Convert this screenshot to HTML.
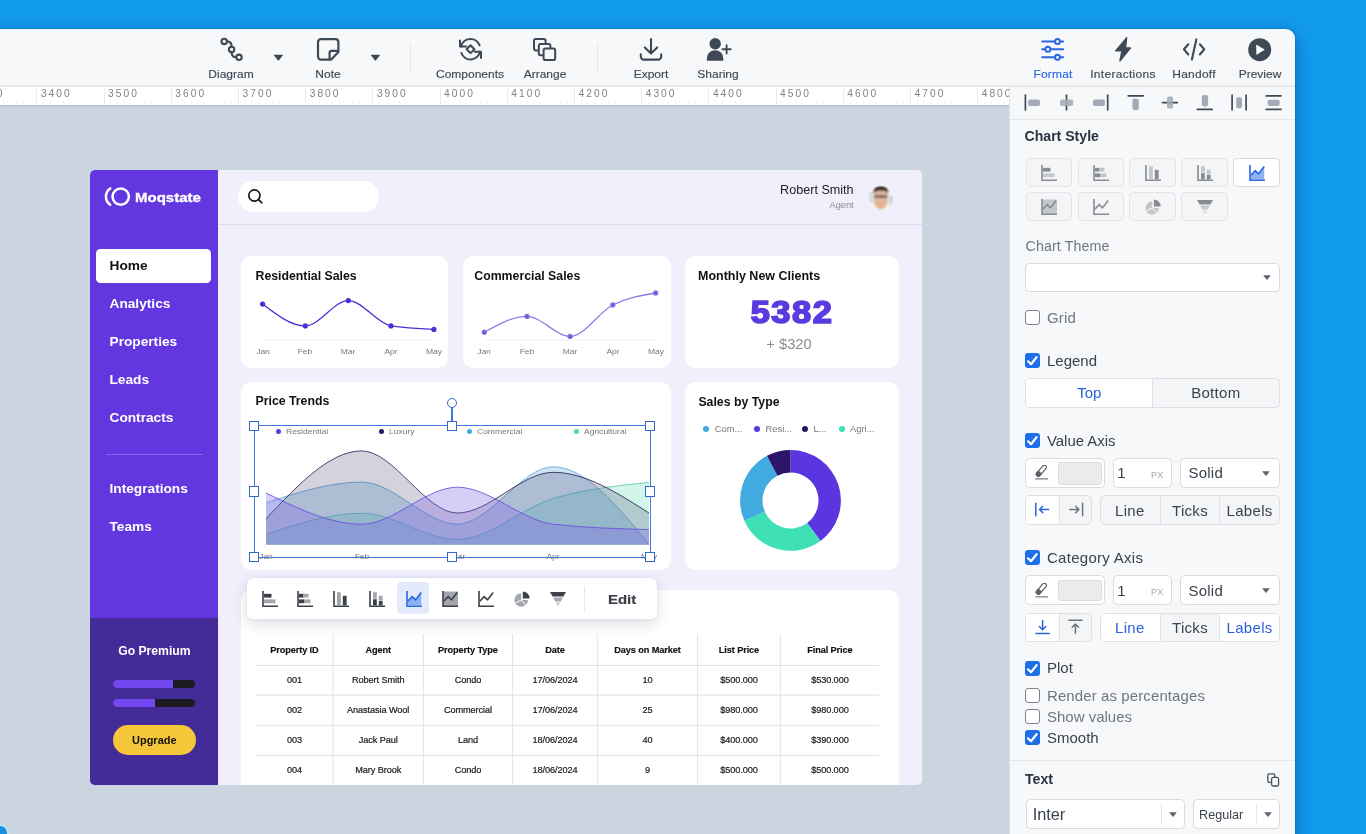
<!DOCTYPE html><html lang="en"><head><meta charset="utf-8"><title>Moqups - Chart Format</title><style>
*{box-sizing:border-box;margin:0;padding:0}
html,body{width:1366px;height:834px;overflow:hidden}
body{background:#129cee;font-family:"Liberation Sans",sans-serif;position:relative;color:#3d4654}
.abs{position:absolute}
#root{position:absolute;left:0;top:0;width:1366px;height:834px;overflow:hidden;will-change:transform}
#winbg{position:absolute;left:-40px;top:29px;width:1335px;height:900px;background:#f7f8fa;border-radius:0 9px 0 0;box-shadow:0 0 1.500px rgba(0,30,80,.55),0 5px 20px rgba(0,30,90,.42)}
#tbline{position:absolute;left:0;top:85px;width:1295px;height:2px;background:#e6e8ec}
.tl{position:absolute;top:67.400px;font-size:11px;line-height:14px;color:#3f4956;white-space:nowrap;transform:translateX(-50%) scaleX(1.090);-webkit-text-stroke:.150px #3f4956}
.tl.on{color:#2b66e3;-webkit-text-stroke-color:#2b66e3}
.ico{position:absolute;overflow:visible}
.sep{position:absolute;top:44px;width:1px;height:27px;background:#e3e5e9}
#ruler{position:absolute;left:0;top:87px;width:1009px;height:18px;background:#fff;overflow:hidden}
#ruler .mj{position:absolute;top:1px;width:1px;height:17px;background:#e8eaed}
#ruler .mn{position:absolute;top:14px;width:1px;height:4px;background:#f1f2f4}
#ruler .rt{position:absolute;top:1px;font-size:10.200px;line-height:12px;letter-spacing:2.050px;color:#7e8288}
#canvas{position:absolute;left:0;top:105px;width:1009px;height:729px;background:#cbd5e0;overflow:hidden}
#pbd{position:absolute;left:1009px;top:87px;width:1px;height:747px;background:#dfe1ea}
#panel{position:absolute;left:1010px;top:87px;width:285px;height:747px;background:#f7f8fa;overflow:hidden}

#frame{position:absolute;left:90px;top:65px;width:832px;height:615px;background:#f0effb;border-radius:5px;overflow:hidden}
#frame .t{position:absolute;white-space:nowrap}
#side{position:absolute;left:0;top:0;width:127.600px;height:615px;background:#6237e0}
#prem{position:absolute;left:0;top:447.800px;width:127.600px;height:170px;background:#442c98}
.card{position:absolute;background:#fff;border-radius:10px}
.hd{position:absolute;width:10.400px;height:10.400px;background:#fff;border:1.500px solid #3468c8}
#ftb{position:absolute;left:246.500px;top:473px;width:410.700px;height:41.200px;background:#fff;border-radius:6px;box-shadow:0 4px 14px rgba(40,40,90,.17),0 0 2px rgba(40,40,90,.10)}

#panel .t{position:absolute;white-space:nowrap}
#panel .bx{position:absolute;border:1px solid #d8dbe0;border-radius:4.500px;background:#fff}
#panel .sg{position:absolute;border:1px solid #dcdfe3;border-radius:4.500px;background:#f4f5f7;overflow:hidden}
#panel .sg i{position:absolute;top:0;bottom:0;display:block}
#panel .sg i.on{background:#fff}
#panel .sg i.dv{width:1px;background:#dfe2e6}
#panel .cb{position:absolute;width:15px;height:15px;border-radius:3px;border:1.300px solid #7d828c;background:#fff}
#panel .cb.on{border:none;background:#1c6fe8}
#panel .csb{position:absolute;width:46.700px;height:29.100px;border:1px solid #e1e4e8;border-radius:4.500px;background:#f4f5f7}
#panel .csb.on{background:#fff;border-color:#d6d9de}
#panel .hr{position:absolute;left:0;width:285px;height:1px;background:#e4e6ea}

</style></head><body>
<div id="root"><div id="winbg"></div><div id="tbline"></div>
<!-- TOOLBAR -->
<svg class="ico" style="left:220px;top:38px" width="24" height="24" viewBox="0 0 24 24" fill="none" stroke="#3f4956" stroke-width="2.1" stroke-linecap="round"><circle cx="4.2" cy="3.4" r="2.7"/><circle cx="11.6" cy="11.4" r="2.7"/><circle cx="19" cy="19.3" r="2.7"/><path d="M7 3.4C10.4 3.4 11.6 5.2 11.6 8.6M11.6 14.2C11.6 17.6 12.9 19.3 16.2 19.3"/></svg>
<div class="tl" style="left:231.2px">Diagram</div>
<svg class="ico" style="left:273.200px;top:54px" width="10.800" height="7.300" viewBox="0 0 10 7"><path d="M1.2 .6h7.6q.9 0 .35.75L5.6 5.9q-.6.7-1.2 0L.85 1.35Q.3.6 1.2.6z" fill="#3f4956"/></svg>
<svg class="ico" style="left:316px;top:37px" width="25" height="25" viewBox="0 0 25 25" fill="none" stroke="#3f4956" stroke-width="2.2" stroke-linejoin="round" stroke-linecap="round"><path d="M5 2.2h14.4a3 3 0 0 1 3 3v9.8l-7.2 7.6H5a3 3 0 0 1-3-3V5.2a3 3 0 0 1 3-3z"/><path d="M13.6 22.3v-6.4a2 2 0 0 1 2-2h6.4"/></svg>
<div class="tl" style="left:328.4px">Note</div>
<svg class="ico" style="left:370.200px;top:54px" width="10.800" height="7.300" viewBox="0 0 10 7"><path d="M1.2 .6h7.6q.9 0 .35.75L5.6 5.9q-.6.7-1.2 0L.85 1.35Q.3.6 1.2.6z" fill="#3f4956"/></svg>
<div class="sep" style="left:410px"></div>
<svg class="ico" style="left:458px;top:37px" width="25" height="25" viewBox="0 0 25 25" fill="none" stroke="#3f4956" stroke-width="2" stroke-linecap="round" stroke-linejoin="round"><path d="M3 9.600A9.700 9.700 0 0 1 21.600 8.400"/><path d="M22 14.800A9.700 9.700 0 0 1 3.400 16"/><path d="M2 3.400v6.200h6.200"/><path d="M23 21v-6.200h-6.200"/><path d="M12.500 8.300l3.900 3.900-3.900 3.900-3.900-3.900z"/></svg>
<div class="tl" style="left:470.3px">Components</div>
<svg class="ico" style="left:531.800px;top:36.700px" width="25" height="25" viewBox="0 0 25 25" fill="#f7f8fa" stroke="#3f4956" stroke-width="2" stroke-linejoin="round"><rect x="2" y="2" width="11.6" height="11.4" rx="1.8"/><rect x="6.8" y="6.9" width="11.6" height="11.4" rx="1.8"/><rect x="11.6" y="11.6" width="11.6" height="11.4" rx="1.8"/></svg>
<div class="tl" style="left:544.5px">Arrange</div>
<div class="sep" style="left:597px"></div>
<svg class="ico" style="left:639px;top:37px" width="25" height="25" viewBox="0 0 25 25" fill="none" stroke="#3f4956" stroke-width="2.1" stroke-linecap="round" stroke-linejoin="round"><path d="M12 2v14M5.8 10.4L12 16.6l6.200-6.200"/><path d="M1.8 17.400v2.200a3 3 0 0 0 3 3h14.400a3 3 0 0 0 3-3v-2.200"/></svg>
<div class="tl" style="left:650.8px">Export</div>
<svg class="ico" style="left:706px;top:37px" width="26" height="25" viewBox="0 0 26 25"><circle cx="9.200" cy="6.800" r="5.700" fill="#3f4956"/><path d="M.9 23.700v-2.300a8.200 8.200 0 0 1 16.400 0v2.300z" fill="#3f4956"/><path d="M20.600 8.200v8.200M16.500 12.300h8.200" stroke="#3f4956" stroke-width="1.900" stroke-linecap="round"/></svg>
<div class="tl" style="left:718.4px">Sharing</div>
<!-- right group -->
<svg class="ico" style="left:1040px;top:37px" width="25" height="25" viewBox="0 0 25 25" fill="#f7f8fa" stroke="#2b66e3" stroke-width="2" stroke-linecap="round"><path d="M2.200 4.500h21M2.200 12.200h21M2.200 20.200h21"/><circle cx="17.500" cy="4.500" r="2.500"/><circle cx="7.900" cy="12.200" r="2.500"/><circle cx="17.500" cy="20.200" r="2.500"/></svg>
<div class="tl on" style="left:1052.600px;letter-spacing:.150px">Format</div>
<svg class="ico" style="left:1113px;top:36px" width="21" height="27" viewBox="0 0 21 27"><path d="M13.700 1.700L2.600 14.900h6.300L6.900 25l10.700-13.100h-5z" fill="#3f4956" stroke="#3f4956" stroke-width="1.300" stroke-linejoin="round"/></svg>
<div class="tl" style="left:1123.100px;letter-spacing:.280px">Interactions</div>
<svg class="ico" style="left:1182px;top:37px" width="25" height="25" viewBox="0 0 25 25" fill="none" stroke="#3f4956" stroke-width="2.100" stroke-linecap="round" stroke-linejoin="round"><path d="M6.300 7.300L2 12.300l4.300 5.200M17.900 7.300l4.300 5-4.300 5.200M14.400 2.200L9.900 22.500"/></svg>
<div class="tl" style="left:1193.900px;letter-spacing:.220px">Handoff</div>
<svg class="ico" style="left:1248px;top:38px" width="24" height="24" viewBox="0 0 24 24"><circle cx="11.700" cy="11.700" r="11.500" fill="#3f4956"/><path d="M9 6.900l7.200 4.400q.6.400 0 .8L9 16.500q-.7.400-.7-.4V7.300q0-.8.700-.4z" fill="#fff"/></svg>
<div class="tl" style="left:1259.700px">Preview</div>

<div id="ruler"><div class="mj" style="left:-30.8px"></div><div class="rt" style="left:-26.3px">3300</div><div class="mn" style="left:-24.08px"></div><div class="mn" style="left:-17.36px"></div><div class="mn" style="left:-10.64px"></div><div class="mn" style="left:-3.92px"></div><div class="mn" style="left:2.80px"></div><div class="mn" style="left:9.52px"></div><div class="mn" style="left:16.24px"></div><div class="mn" style="left:22.96px"></div><div class="mn" style="left:29.68px"></div><div class="mj" style="left:36.4px"></div><div class="rt" style="left:40.9px">3400</div><div class="mn" style="left:43.12px"></div><div class="mn" style="left:49.84px"></div><div class="mn" style="left:56.56px"></div><div class="mn" style="left:63.28px"></div><div class="mn" style="left:70.00px"></div><div class="mn" style="left:76.72px"></div><div class="mn" style="left:83.44px"></div><div class="mn" style="left:90.16px"></div><div class="mn" style="left:96.88px"></div><div class="mj" style="left:103.6px"></div><div class="rt" style="left:108.1px">3500</div><div class="mn" style="left:110.32px"></div><div class="mn" style="left:117.04px"></div><div class="mn" style="left:123.76px"></div><div class="mn" style="left:130.48px"></div><div class="mn" style="left:137.20px"></div><div class="mn" style="left:143.92px"></div><div class="mn" style="left:150.64px"></div><div class="mn" style="left:157.36px"></div><div class="mn" style="left:164.08px"></div><div class="mj" style="left:170.8px"></div><div class="rt" style="left:175.3px">3600</div><div class="mn" style="left:177.52px"></div><div class="mn" style="left:184.24px"></div><div class="mn" style="left:190.96px"></div><div class="mn" style="left:197.68px"></div><div class="mn" style="left:204.40px"></div><div class="mn" style="left:211.12px"></div><div class="mn" style="left:217.84px"></div><div class="mn" style="left:224.56px"></div><div class="mn" style="left:231.28px"></div><div class="mj" style="left:238.0px"></div><div class="rt" style="left:242.5px">3700</div><div class="mn" style="left:244.72px"></div><div class="mn" style="left:251.44px"></div><div class="mn" style="left:258.16px"></div><div class="mn" style="left:264.88px"></div><div class="mn" style="left:271.60px"></div><div class="mn" style="left:278.32px"></div><div class="mn" style="left:285.04px"></div><div class="mn" style="left:291.76px"></div><div class="mn" style="left:298.48px"></div><div class="mj" style="left:305.2px"></div><div class="rt" style="left:309.7px">3800</div><div class="mn" style="left:311.92px"></div><div class="mn" style="left:318.64px"></div><div class="mn" style="left:325.36px"></div><div class="mn" style="left:332.08px"></div><div class="mn" style="left:338.80px"></div><div class="mn" style="left:345.52px"></div><div class="mn" style="left:352.24px"></div><div class="mn" style="left:358.96px"></div><div class="mn" style="left:365.68px"></div><div class="mj" style="left:372.4px"></div><div class="rt" style="left:376.9px">3900</div><div class="mn" style="left:379.12px"></div><div class="mn" style="left:385.84px"></div><div class="mn" style="left:392.56px"></div><div class="mn" style="left:399.28px"></div><div class="mn" style="left:406.00px"></div><div class="mn" style="left:412.72px"></div><div class="mn" style="left:419.44px"></div><div class="mn" style="left:426.16px"></div><div class="mn" style="left:432.88px"></div><div class="mj" style="left:439.6px"></div><div class="rt" style="left:444.1px">4000</div><div class="mn" style="left:446.32px"></div><div class="mn" style="left:453.04px"></div><div class="mn" style="left:459.76px"></div><div class="mn" style="left:466.48px"></div><div class="mn" style="left:473.20px"></div><div class="mn" style="left:479.92px"></div><div class="mn" style="left:486.64px"></div><div class="mn" style="left:493.36px"></div><div class="mn" style="left:500.08px"></div><div class="mj" style="left:506.8px"></div><div class="rt" style="left:511.3px">4100</div><div class="mn" style="left:513.52px"></div><div class="mn" style="left:520.24px"></div><div class="mn" style="left:526.96px"></div><div class="mn" style="left:533.68px"></div><div class="mn" style="left:540.40px"></div><div class="mn" style="left:547.12px"></div><div class="mn" style="left:553.84px"></div><div class="mn" style="left:560.56px"></div><div class="mn" style="left:567.28px"></div><div class="mj" style="left:574.0px"></div><div class="rt" style="left:578.5px">4200</div><div class="mn" style="left:580.72px"></div><div class="mn" style="left:587.44px"></div><div class="mn" style="left:594.16px"></div><div class="mn" style="left:600.88px"></div><div class="mn" style="left:607.60px"></div><div class="mn" style="left:614.32px"></div><div class="mn" style="left:621.04px"></div><div class="mn" style="left:627.76px"></div><div class="mn" style="left:634.48px"></div><div class="mj" style="left:641.2px"></div><div class="rt" style="left:645.7px">4300</div><div class="mn" style="left:647.92px"></div><div class="mn" style="left:654.64px"></div><div class="mn" style="left:661.36px"></div><div class="mn" style="left:668.08px"></div><div class="mn" style="left:674.80px"></div><div class="mn" style="left:681.52px"></div><div class="mn" style="left:688.24px"></div><div class="mn" style="left:694.96px"></div><div class="mn" style="left:701.68px"></div><div class="mj" style="left:708.4px"></div><div class="rt" style="left:712.9px">4400</div><div class="mn" style="left:715.12px"></div><div class="mn" style="left:721.84px"></div><div class="mn" style="left:728.56px"></div><div class="mn" style="left:735.28px"></div><div class="mn" style="left:742.00px"></div><div class="mn" style="left:748.72px"></div><div class="mn" style="left:755.44px"></div><div class="mn" style="left:762.16px"></div><div class="mn" style="left:768.88px"></div><div class="mj" style="left:775.6px"></div><div class="rt" style="left:780.1px">4500</div><div class="mn" style="left:782.32px"></div><div class="mn" style="left:789.04px"></div><div class="mn" style="left:795.76px"></div><div class="mn" style="left:802.48px"></div><div class="mn" style="left:809.20px"></div><div class="mn" style="left:815.92px"></div><div class="mn" style="left:822.64px"></div><div class="mn" style="left:829.36px"></div><div class="mn" style="left:836.08px"></div><div class="mj" style="left:842.8px"></div><div class="rt" style="left:847.3px">4600</div><div class="mn" style="left:849.52px"></div><div class="mn" style="left:856.24px"></div><div class="mn" style="left:862.96px"></div><div class="mn" style="left:869.68px"></div><div class="mn" style="left:876.40px"></div><div class="mn" style="left:883.12px"></div><div class="mn" style="left:889.84px"></div><div class="mn" style="left:896.56px"></div><div class="mn" style="left:903.28px"></div><div class="mj" style="left:910.0px"></div><div class="rt" style="left:914.5px">4700</div><div class="mn" style="left:916.72px"></div><div class="mn" style="left:923.44px"></div><div class="mn" style="left:930.16px"></div><div class="mn" style="left:936.88px"></div><div class="mn" style="left:943.60px"></div><div class="mn" style="left:950.32px"></div><div class="mn" style="left:957.04px"></div><div class="mn" style="left:963.76px"></div><div class="mn" style="left:970.48px"></div><div class="mj" style="left:977.2px"></div><div class="rt" style="left:981.7px">4800</div><div class="mn" style="left:983.92px"></div><div class="mn" style="left:990.64px"></div><div class="mn" style="left:997.36px"></div><div class="mn" style="left:1004.08px"></div><div class="mn" style="left:1010.80px"></div><div class="mn" style="left:1017.52px"></div><div class="mn" style="left:1024.24px"></div><div class="mn" style="left:1030.96px"></div><div class="mn" style="left:1037.68px"></div><div class="mj" style="left:1044.4px"></div><div class="rt" style="left:1048.9px">4900</div><div class="mn" style="left:1051.12px"></div><div class="mn" style="left:1057.84px"></div><div class="mn" style="left:1064.56px"></div><div class="mn" style="left:1071.28px"></div><div class="mn" style="left:1078.00px"></div><div class="mn" style="left:1084.72px"></div><div class="mn" style="left:1091.44px"></div><div class="mn" style="left:1098.16px"></div><div class="mn" style="left:1104.88px"></div></div>
<div id="canvas"><div class="abs" style="left:0;top:0;width:1010px;height:3px;background:linear-gradient(rgba(90,110,150,.16),rgba(90,110,150,0))"></div>
<div id="frame">
<div id="side"></div><div id="prem"></div>
<svg class="abs" style="left:13px;top:16px" width="28" height="22" viewBox="0 0 28 22" fill="none" stroke="#fff" stroke-width="2.500" stroke-linecap="round"><circle cx="17.700" cy="10.600" r="8.200"/><path d="M7.200 2.400A10 10 0 0 0 7.200 18.800"/></svg>
<div class="t" style="left:45.20px;top:19px;font-size:13.60px;line-height:17px;font-weight:700;color:#fff;transform:scaleX(1.105);transform-origin:0 50%;-webkit-text-stroke:.350px #fff;">Moqstate</div>
<div class="abs" style="left:6.300px;top:78.600px;width:114.700px;height:34px;background:#fff;border-radius:4.500px"></div>
<div class="t" style="left:19.50px;top:87px;font-size:13.70px;line-height:17px;font-weight:700;color:#111;">Home</div>
<div class="t" style="left:19.50px;top:125px;font-size:13.70px;line-height:17px;font-weight:700;color:#fff;">Analytics</div>
<div class="t" style="left:19.50px;top:163px;font-size:13.70px;line-height:17px;font-weight:700;color:#fff;">Properties</div>
<div class="t" style="left:19.50px;top:201px;font-size:13.70px;line-height:17px;font-weight:700;color:#fff;">Leads</div>
<div class="t" style="left:19.50px;top:239px;font-size:13.70px;line-height:17px;font-weight:700;color:#fff;">Contracts</div>
<div class="t" style="left:19.50px;top:310px;font-size:13.70px;line-height:17px;font-weight:700;color:#fff;">Integrations</div>
<div class="t" style="left:19.50px;top:348px;font-size:13.70px;line-height:17px;font-weight:700;color:#fff;">Teams</div>
<div class="abs" style="left:15.600px;top:284.200px;width:97.600px;height:1px;background:#8a68ee"></div>
<div class="t" style="left:64.40px;top:473px;font-size:12.20px;line-height:16px;font-weight:700;color:#fff;transform:translateX(-50%);">Go Premium</div>
<div class="abs" style="left:22.600px;top:510.100px;width:82.500px;height:7.800px;border-radius:4px;background:#1c1b22;overflow:hidden"><div style="width:60px;height:100%;background:#7448f0"></div></div>
<div class="abs" style="left:22.600px;top:528.800px;width:82.500px;height:7.800px;border-radius:4px;background:#1c1b22;overflow:hidden"><div style="width:42.400px;height:100%;background:#7448f0"></div></div>
<div class="abs" style="left:22.600px;top:555.100px;width:83.400px;height:30.200px;border-radius:15.100px;background:#f6c63a"></div>
<div class="t" style="left:64.30px;top:563px;font-size:11.00px;line-height:14px;font-weight:700;color:#111;transform:translateX(-50%);">Upgrade</div>
<div class="abs" style="left:148.200px;top:11.200px;width:140.800px;height:31px;border-radius:15.500px;background:#fff"></div>
<svg class="abs" style="left:156px;top:17px" width="18" height="18" viewBox="0 0 18 18" fill="none" stroke="#111" stroke-width="1.600" stroke-linecap="round"><circle cx="8.400" cy="8.500" r="5.600"/><path d="M12.600 12.700l3.300 3.100"/></svg>
<div class="abs" style="left:127.600px;top:53.800px;width:705px;height:1px;background:#dddbee"></div>
<div class="t" style="left:763.60px;top:12px;font-size:12.60px;line-height:16px;font-weight:400;color:#222;transform:translateX(-100%);transform-origin:100% 50%;">Robert Smith</div>
<div class="t" style="left:763.60px;top:29px;font-size:9.20px;line-height:12px;font-weight:400;color:#8a8a93;transform:translateX(-100%);transform-origin:100% 50%;">Agent</div>
<svg class="abs" style="left:778px;top:15px" width="26" height="27" viewBox="868 185 26 27"><defs><clipPath id="av"><circle cx="880.900" cy="198.300" r="12.500"/></clipPath><filter id="avb" x="-20%" y="-20%" width="140%" height="140%"><feGaussianBlur stdDeviation=".900"/></filter></defs><g clip-path="url(#av)"><rect x="866" y="183" width="30" height="31" fill="#f3f5f6"/><g filter="url(#avb)"><ellipse cx="870.800" cy="197" rx="2.600" ry="6.500" fill="#d6dddd"/><ellipse cx="890.900" cy="200" rx="2.400" ry="5.500" fill="#cdd6d2"/><path d="M872 214q1-5 9-5.500 8 .500 9 5.500z" fill="#eef0ef"/><ellipse cx="880.700" cy="198.600" rx="7.200" ry="10.800" fill="#dcb59f"/><path d="M873.300 194.500Q872.500 186.300 880.700 186.200 889 186.300 888.200 194.500 887 190.600 880.700 190.500 874.500 190.600 873.300 194.500z" fill="#33241e"/><rect x="874" y="195.600" width="13.600" height="2" rx=".800" fill="#5a3a2c"/><ellipse cx="880.800" cy="204.500" rx="5" ry="4" fill="#e6b394"/></g></g></svg>
<div class="card" style="left:151.100px;top:85.600px;width:206.500px;height:112.400px"></div>
<div class="card" style="left:372.900px;top:85.600px;width:208.200px;height:112.400px"></div>
<div class="card" style="left:594.900px;top:85.600px;width:214.400px;height:112.400px"></div>
<div class="t" style="left:165.50px;top:98px;font-size:12.30px;line-height:16px;font-weight:700;color:#111;">Residential Sales</div>
<div class="t" style="left:384.30px;top:98px;font-size:12.30px;line-height:16px;font-weight:700;color:#111;">Commercial Sales</div>
<div class="t" style="left:608.40px;top:98px;font-size:12.30px;line-height:16px;font-weight:700;color:#111;transform:scaleX(1.016);transform-origin:0 50%;">Monthly New Clients</div>
<svg class="abs" style="left:0;top:0" width="832" height="615" viewBox="90 170 832 615" fill="none"><path d="M262.6 340.200H433.9" stroke="#f1f1f4" stroke-width="1"/><path d="M262.60,304.10 C276.83,315.00 291.07,325.90 305.30,325.90 C319.63,325.90 333.97,300.60 348.30,300.60 C362.53,300.60 376.77,323.58 391.00,325.90 C405.30,328.23 419.60,328.82 433.90,329.40" stroke="#4b2fd6" stroke-width="1.300"/><circle cx="262.6" cy="304.1" r="2.600" fill="#4b2fd6"/><circle cx="305.3" cy="325.9" r="2.600" fill="#4b2fd6"/><circle cx="348.3" cy="300.6" r="2.600" fill="#4b2fd6"/><circle cx="391.0" cy="325.9" r="2.600" fill="#4b2fd6"/><circle cx="433.9" cy="329.4" r="2.600" fill="#4b2fd6"/></svg>
<svg class="abs" style="left:0;top:0" width="832" height="615" viewBox="90 170 832 615" fill="none"><path d="M484.3 340.200H655.6" stroke="#f1f1f4" stroke-width="1"/><path d="M484.30,332.20 C498.53,324.30 512.77,316.40 527.00,316.40 C541.37,316.40 555.73,336.40 570.10,336.40 C584.33,336.40 598.57,312.23 612.80,305.00 C627.07,297.75 641.33,295.38 655.60,293.00" stroke="#8c7ce6" stroke-width="1.300"/><circle cx="484.3" cy="332.2" r="2.700" fill="#8c7ce6"/><circle cx="484.3" cy="332.2" r="1.600" fill="#6a58d2"/><circle cx="527.0" cy="316.4" r="2.700" fill="#8c7ce6"/><circle cx="527.0" cy="316.4" r="1.600" fill="#6a58d2"/><circle cx="570.1" cy="336.4" r="2.700" fill="#8c7ce6"/><circle cx="570.1" cy="336.4" r="1.600" fill="#6a58d2"/><circle cx="612.8" cy="305.0" r="2.700" fill="#8c7ce6"/><circle cx="612.8" cy="305.0" r="1.600" fill="#6a58d2"/><circle cx="655.6" cy="293.0" r="2.700" fill="#8c7ce6"/><circle cx="655.6" cy="293.0" r="1.600" fill="#6a58d2"/></svg>
<div class="t" style="left:172.60px;top:176px;font-size:7.60px;line-height:11px;font-weight:400;color:#777;transform:translateX(-50%) scaleX(1.120);">Jan</div>
<div class="t" style="left:215.30px;top:176px;font-size:7.60px;line-height:11px;font-weight:400;color:#777;transform:translateX(-50%) scaleX(1.120);">Feb</div>
<div class="t" style="left:258.30px;top:176px;font-size:7.60px;line-height:11px;font-weight:400;color:#777;transform:translateX(-50%) scaleX(1.120);">Mar</div>
<div class="t" style="left:301.00px;top:176px;font-size:7.60px;line-height:11px;font-weight:400;color:#777;transform:translateX(-50%) scaleX(1.120);">Apr</div>
<div class="t" style="left:343.90px;top:176px;font-size:7.60px;line-height:11px;font-weight:400;color:#777;transform:translateX(-50%) scaleX(1.120);">May</div>
<div class="t" style="left:394.30px;top:176px;font-size:7.60px;line-height:11px;font-weight:400;color:#777;transform:translateX(-50%) scaleX(1.120);">Jan</div>
<div class="t" style="left:437.00px;top:176px;font-size:7.60px;line-height:11px;font-weight:400;color:#777;transform:translateX(-50%) scaleX(1.120);">Feb</div>
<div class="t" style="left:480.10px;top:176px;font-size:7.60px;line-height:11px;font-weight:400;color:#777;transform:translateX(-50%) scaleX(1.120);">Mar</div>
<div class="t" style="left:522.80px;top:176px;font-size:7.60px;line-height:11px;font-weight:400;color:#777;transform:translateX(-50%) scaleX(1.120);">Apr</div>
<div class="t" style="left:565.60px;top:176px;font-size:7.60px;line-height:11px;font-weight:400;color:#777;transform:translateX(-50%) scaleX(1.120);">May</div>
<div class="t" style="left:702.40px;top:124px;font-size:30.70px;line-height:37px;font-weight:700;color:#5a3be0;transform:translateX(-50%) scaleX(1.120);letter-spacing:1.400px;-webkit-text-stroke:1.700px #5a3be0;">5382</div>
<div class="t" style="left:698.50px;top:165px;font-size:14.00px;line-height:18px;font-weight:400;color:#8c8c8c;transform:translateX(-50%) scaleX(1.050);">+ $320</div>
<div class="card" style="left:151.100px;top:211.800px;width:430px;height:188.600px"></div>
<div class="card" style="left:594.900px;top:211.800px;width:214.400px;height:188.600px"></div>
<div class="t" style="left:165.50px;top:223px;font-size:12.30px;line-height:16px;font-weight:700;color:#111;">Price Trends</div>
<div class="t" style="left:608.40px;top:224px;font-size:12.30px;line-height:16px;font-weight:700;color:#111;">Sales by Type</div>
<svg class="abs" style="left:0;top:0" width="832" height="615" viewBox="90 170 832 615" fill="none"><path d="M266.10,534.30 C298.00,523.80 329.90,513.30 361.80,513.30 C393.70,513.30 425.60,539.50 457.50,539.50 C489.43,539.50 521.37,508.02 553.30,498.50 C585.20,488.99 617.10,485.70 649.00,482.40 L649.0,544.8 L266.1,544.8 Z" fill="rgba(80,215,180,.26)"/><path d="M266.10,534.30 C298.00,523.80 329.90,513.30 361.80,513.30 C393.70,513.30 425.60,539.50 457.50,539.50 C489.43,539.50 521.37,508.02 553.30,498.50 C585.20,488.99 617.10,485.70 649.00,482.40" stroke="#58d0b0" stroke-width=".850"/><path d="M266.10,502.80 C298.00,492.45 329.90,482.10 361.80,482.10 C393.70,482.10 425.60,524.20 457.50,524.20 C489.43,524.20 521.37,466.80 553.30,466.80 C585.20,466.80 617.10,505.55 649.00,544.30 L649.0,544.8 L266.1,544.8 Z" fill="rgba(90,165,220,.30)"/><path d="M266.10,502.80 C298.00,492.45 329.90,482.10 361.80,482.10 C393.70,482.10 425.60,524.20 457.50,524.20 C489.43,524.20 521.37,466.80 553.30,466.80 C585.20,466.80 617.10,505.55 649.00,544.30" stroke="#62a9d8" stroke-width=".850"/><path d="M266.10,518.70 C298.00,484.80 329.90,450.90 361.80,450.90 C393.70,450.90 425.60,513.00 457.50,513.00 C489.43,513.00 521.37,472.30 553.30,472.30 C585.20,472.30 617.10,492.65 649.00,513.00 L649.0,544.8 L266.1,544.8 Z" fill="rgba(60,50,100,.22)"/><path d="M266.10,518.70 C298.00,484.80 329.90,450.90 361.80,450.90 C393.70,450.90 425.60,513.00 457.50,513.00 C489.43,513.00 521.37,472.30 553.30,472.30 C585.20,472.30 617.10,492.65 649.00,513.00" stroke="#2c2454" stroke-width=".850"/><path d="M266.10,493.00 C298.00,508.60 329.90,524.20 361.80,524.20 C393.70,524.20 425.60,487.20 457.50,487.20 C489.43,487.20 521.37,520.60 553.30,524.20 C585.20,527.80 617.10,528.70 649.00,529.60 L649.0,544.8 L266.1,544.8 Z" fill="rgba(122,92,232,.30)"/><path d="M266.10,493.00 C298.00,508.60 329.90,524.20 361.80,524.20 C393.70,524.20 425.60,487.20 457.50,487.20 C489.43,487.20 521.37,520.60 553.30,524.20 C585.20,527.80 617.10,528.70 649.00,529.60" stroke="#6a4ce0" stroke-width=".850"/></svg>
<div class="abs" style="left:185.8px;top:259.0px;width:5.400px;height:5.400px;border-radius:50%;background:#5b3be0"></div>
<div class="t" style="left:195.70px;top:256px;font-size:7.60px;line-height:11px;font-weight:400;color:#777;transform:scaleX(1.120);transform-origin:0 50%;">Residential</div>
<div class="abs" style="left:288.9px;top:259.0px;width:5.400px;height:5.400px;border-radius:50%;background:#251a5c"></div>
<div class="t" style="left:298.80px;top:256px;font-size:7.60px;line-height:11px;font-weight:400;color:#777;transform:scaleX(1.120);transform-origin:0 50%;">Luxury</div>
<div class="abs" style="left:376.8px;top:259.0px;width:5.400px;height:5.400px;border-radius:50%;background:#41a9de"></div>
<div class="t" style="left:386.80px;top:256px;font-size:7.60px;line-height:11px;font-weight:400;color:#777;transform:scaleX(1.120);transform-origin:0 50%;">Commercial</div>
<div class="abs" style="left:483.8px;top:259.0px;width:5.400px;height:5.400px;border-radius:50%;background:#45dcb4"></div>
<div class="t" style="left:493.80px;top:256px;font-size:7.60px;line-height:11px;font-weight:400;color:#777;transform:scaleX(1.120);transform-origin:0 50%;">Agricultural</div>
<div class="t" style="left:176.10px;top:381px;font-size:7.60px;line-height:11px;font-weight:400;color:#777;transform:translateX(-50%) scaleX(1.120);">Jan</div>
<div class="t" style="left:271.80px;top:381px;font-size:7.60px;line-height:11px;font-weight:400;color:#777;transform:translateX(-50%) scaleX(1.120);">Feb</div>
<div class="t" style="left:367.50px;top:381px;font-size:7.60px;line-height:11px;font-weight:400;color:#777;transform:translateX(-50%) scaleX(1.120);">Mar</div>
<div class="t" style="left:463.30px;top:381px;font-size:7.60px;line-height:11px;font-weight:400;color:#777;transform:translateX(-50%) scaleX(1.120);">Apr</div>
<div class="t" style="left:559.00px;top:381px;font-size:7.60px;line-height:11px;font-weight:400;color:#777;transform:translateX(-50%) scaleX(1.120);">May</div>
<svg class="abs" style="left:0;top:0" width="832" height="615" viewBox="90 170 832 615"><path d="M790.50,450.00 A50.4,50.4 0 0 1 820.48,540.91 L807.16,522.91 A28.0,28.0 0 0 0 790.50,472.40 Z" fill="#5b36e0"/><path d="M820.48,540.91 A50.4,50.4 0 0 1 744.35,520.66 L764.86,511.65 A28.0,28.0 0 0 0 807.16,522.91 Z" fill="#3fe0b6"/><path d="M744.35,520.66 A50.4,50.4 0 0 1 766.99,455.82 L777.44,475.63 A28.0,28.0 0 0 0 764.86,511.65 Z" fill="#41abe0"/><path d="M766.99,455.82 A50.4,50.4 0 0 1 790.50,450.00 L790.50,472.40 A28.0,28.0 0 0 0 777.44,475.63 Z" fill="#2a1568"/></svg>
<div class="abs" style="left:613.0px;top:255.9px;width:6.400px;height:6.400px;border-radius:50%;background:#41abe0"></div>
<div class="t" style="left:624.80px;top:252px;font-size:9.40px;line-height:13px;font-weight:400;color:#777;">Com...</div>
<div class="abs" style="left:664.1px;top:255.9px;width:6.400px;height:6.400px;border-radius:50%;background:#5b36e0"></div>
<div class="t" style="left:675.50px;top:252px;font-size:9.40px;line-height:13px;font-weight:400;color:#777;">Resi...</div>
<div class="abs" style="left:712.1px;top:255.9px;width:6.400px;height:6.400px;border-radius:50%;background:#2a1568"></div>
<div class="t" style="left:723.40px;top:252px;font-size:9.40px;line-height:13px;font-weight:400;color:#777;">L...</div>
<div class="abs" style="left:749.0px;top:255.9px;width:6.400px;height:6.400px;border-radius:50%;background:#3fe0b6"></div>
<div class="t" style="left:760.00px;top:252px;font-size:9.40px;line-height:13px;font-weight:400;color:#777;">Agri...</div>
<div class="card" style="left:151.100px;top:420px;width:658.200px;height:240px"></div>
<svg class="abs" style="left:0;top:0" width="832" height="615" viewBox="90 170 832 615" stroke="#e3e3e8" stroke-width="1"><path d="M255.700 665.5H879.500"/><path d="M255.700 695.2H879.500"/><path d="M255.700 725.3H879.500"/><path d="M255.700 755.3H879.500"/><path d="M333.1 634V790"/><path d="M423.3 634V790"/><path d="M512.6 634V790"/><path d="M597.3 634V790"/><path d="M697.6 634V790"/><path d="M780.3 634V790"/></svg>
<div class="t" style="left:204.40px;top:474px;font-size:9.20px;line-height:12px;font-weight:700;color:#111;transform:translateX(-50%);letter-spacing:-.100px;-webkit-text-stroke:.150px #111;">Property ID</div>
<div class="t" style="left:288.20px;top:474px;font-size:9.20px;line-height:12px;font-weight:700;color:#111;transform:translateX(-50%);letter-spacing:-.100px;-webkit-text-stroke:.150px #111;">Agent</div>
<div class="t" style="left:377.95px;top:474px;font-size:9.20px;line-height:12px;font-weight:700;color:#111;transform:translateX(-50%);letter-spacing:-.100px;-webkit-text-stroke:.150px #111;">Property Type</div>
<div class="t" style="left:464.95px;top:474px;font-size:9.20px;line-height:12px;font-weight:700;color:#111;transform:translateX(-50%);letter-spacing:-.100px;-webkit-text-stroke:.150px #111;">Date</div>
<div class="t" style="left:557.45px;top:474px;font-size:9.20px;line-height:12px;font-weight:700;color:#111;transform:translateX(-50%);letter-spacing:-.100px;-webkit-text-stroke:.150px #111;">Days on Market</div>
<div class="t" style="left:648.95px;top:474px;font-size:9.20px;line-height:12px;font-weight:700;color:#111;transform:translateX(-50%);letter-spacing:-.100px;-webkit-text-stroke:.150px #111;">List Price</div>
<div class="t" style="left:739.90px;top:474px;font-size:9.20px;line-height:12px;font-weight:700;color:#111;transform:translateX(-50%);letter-spacing:-.100px;-webkit-text-stroke:.150px #111;">Final Price</div>
<div class="t" style="left:204.40px;top:504px;font-size:9.20px;line-height:12px;font-weight:400;color:#1a1a1a;transform:translateX(-50%);letter-spacing:-.100px;-webkit-text-stroke:.200px #1a1a1a;">001</div>
<div class="t" style="left:288.20px;top:504px;font-size:9.20px;line-height:12px;font-weight:400;color:#1a1a1a;transform:translateX(-50%);letter-spacing:-.100px;-webkit-text-stroke:.200px #1a1a1a;">Robert Smith</div>
<div class="t" style="left:377.95px;top:504px;font-size:9.20px;line-height:12px;font-weight:400;color:#1a1a1a;transform:translateX(-50%);letter-spacing:-.100px;-webkit-text-stroke:.200px #1a1a1a;">Condo</div>
<div class="t" style="left:464.95px;top:504px;font-size:9.20px;line-height:12px;font-weight:400;color:#1a1a1a;transform:translateX(-50%);letter-spacing:-.100px;-webkit-text-stroke:.200px #1a1a1a;">17/06/2024</div>
<div class="t" style="left:557.45px;top:504px;font-size:9.20px;line-height:12px;font-weight:400;color:#1a1a1a;transform:translateX(-50%);letter-spacing:-.100px;-webkit-text-stroke:.200px #1a1a1a;">10</div>
<div class="t" style="left:648.95px;top:504px;font-size:9.20px;line-height:12px;font-weight:400;color:#1a1a1a;transform:translateX(-50%);letter-spacing:-.100px;-webkit-text-stroke:.200px #1a1a1a;">$500.000</div>
<div class="t" style="left:739.90px;top:504px;font-size:9.20px;line-height:12px;font-weight:400;color:#1a1a1a;transform:translateX(-50%);letter-spacing:-.100px;-webkit-text-stroke:.200px #1a1a1a;">$530.000</div>
<div class="t" style="left:204.40px;top:534px;font-size:9.20px;line-height:12px;font-weight:400;color:#1a1a1a;transform:translateX(-50%);letter-spacing:-.100px;-webkit-text-stroke:.200px #1a1a1a;">002</div>
<div class="t" style="left:288.20px;top:534px;font-size:9.20px;line-height:12px;font-weight:400;color:#1a1a1a;transform:translateX(-50%);letter-spacing:-.100px;-webkit-text-stroke:.200px #1a1a1a;">Anastasia Wool</div>
<div class="t" style="left:377.95px;top:534px;font-size:9.20px;line-height:12px;font-weight:400;color:#1a1a1a;transform:translateX(-50%);letter-spacing:-.100px;-webkit-text-stroke:.200px #1a1a1a;">Commercial</div>
<div class="t" style="left:464.95px;top:534px;font-size:9.20px;line-height:12px;font-weight:400;color:#1a1a1a;transform:translateX(-50%);letter-spacing:-.100px;-webkit-text-stroke:.200px #1a1a1a;">17/06/2024</div>
<div class="t" style="left:557.45px;top:534px;font-size:9.20px;line-height:12px;font-weight:400;color:#1a1a1a;transform:translateX(-50%);letter-spacing:-.100px;-webkit-text-stroke:.200px #1a1a1a;">25</div>
<div class="t" style="left:648.95px;top:534px;font-size:9.20px;line-height:12px;font-weight:400;color:#1a1a1a;transform:translateX(-50%);letter-spacing:-.100px;-webkit-text-stroke:.200px #1a1a1a;">$980.000</div>
<div class="t" style="left:739.90px;top:534px;font-size:9.20px;line-height:12px;font-weight:400;color:#1a1a1a;transform:translateX(-50%);letter-spacing:-.100px;-webkit-text-stroke:.200px #1a1a1a;">$980.000</div>
<div class="t" style="left:204.40px;top:564px;font-size:9.20px;line-height:12px;font-weight:400;color:#1a1a1a;transform:translateX(-50%);letter-spacing:-.100px;-webkit-text-stroke:.200px #1a1a1a;">003</div>
<div class="t" style="left:288.20px;top:564px;font-size:9.20px;line-height:12px;font-weight:400;color:#1a1a1a;transform:translateX(-50%);letter-spacing:-.100px;-webkit-text-stroke:.200px #1a1a1a;">Jack Paul</div>
<div class="t" style="left:377.95px;top:564px;font-size:9.20px;line-height:12px;font-weight:400;color:#1a1a1a;transform:translateX(-50%);letter-spacing:-.100px;-webkit-text-stroke:.200px #1a1a1a;">Land</div>
<div class="t" style="left:464.95px;top:564px;font-size:9.20px;line-height:12px;font-weight:400;color:#1a1a1a;transform:translateX(-50%);letter-spacing:-.100px;-webkit-text-stroke:.200px #1a1a1a;">18/06/2024</div>
<div class="t" style="left:557.45px;top:564px;font-size:9.20px;line-height:12px;font-weight:400;color:#1a1a1a;transform:translateX(-50%);letter-spacing:-.100px;-webkit-text-stroke:.200px #1a1a1a;">40</div>
<div class="t" style="left:648.95px;top:564px;font-size:9.20px;line-height:12px;font-weight:400;color:#1a1a1a;transform:translateX(-50%);letter-spacing:-.100px;-webkit-text-stroke:.200px #1a1a1a;">$400.000</div>
<div class="t" style="left:739.90px;top:564px;font-size:9.20px;line-height:12px;font-weight:400;color:#1a1a1a;transform:translateX(-50%);letter-spacing:-.100px;-webkit-text-stroke:.200px #1a1a1a;">$390.000</div>
<div class="t" style="left:204.40px;top:594px;font-size:9.20px;line-height:12px;font-weight:400;color:#1a1a1a;transform:translateX(-50%);letter-spacing:-.100px;-webkit-text-stroke:.200px #1a1a1a;">004</div>
<div class="t" style="left:288.20px;top:594px;font-size:9.20px;line-height:12px;font-weight:400;color:#1a1a1a;transform:translateX(-50%);letter-spacing:-.100px;-webkit-text-stroke:.200px #1a1a1a;">Mary Brook</div>
<div class="t" style="left:377.95px;top:594px;font-size:9.20px;line-height:12px;font-weight:400;color:#1a1a1a;transform:translateX(-50%);letter-spacing:-.100px;-webkit-text-stroke:.200px #1a1a1a;">Condo</div>
<div class="t" style="left:464.95px;top:594px;font-size:9.20px;line-height:12px;font-weight:400;color:#1a1a1a;transform:translateX(-50%);letter-spacing:-.100px;-webkit-text-stroke:.200px #1a1a1a;">18/06/2024</div>
<div class="t" style="left:557.45px;top:594px;font-size:9.20px;line-height:12px;font-weight:400;color:#1a1a1a;transform:translateX(-50%);letter-spacing:-.100px;-webkit-text-stroke:.200px #1a1a1a;">9</div>
<div class="t" style="left:648.95px;top:594px;font-size:9.20px;line-height:12px;font-weight:400;color:#1a1a1a;transform:translateX(-50%);letter-spacing:-.100px;-webkit-text-stroke:.200px #1a1a1a;">$500.000</div>
<div class="t" style="left:739.90px;top:594px;font-size:9.20px;line-height:12px;font-weight:400;color:#1a1a1a;transform:translateX(-50%);letter-spacing:-.100px;-webkit-text-stroke:.200px #1a1a1a;">$500.000</div>
</div>
<div class="abs" style="left:253.6px;top:320.4px;width:397.1px;height:132.3px;border:1.500px solid #4079dc"></div>
<div class="abs" style="left:451.4px;top:302.0px;width:1.300px;height:20px;background:#4079dc"></div>
<div class="abs" style="left:446.9px;top:293.0px;width:10.400px;height:10.400px;border-radius:50%;background:#fff;border:1.400px solid #3468c8"></div>
<div class="hd" style="left:249.1px;top:316.0px"></div>
<div class="hd" style="left:446.9px;top:316.0px"></div>
<div class="hd" style="left:644.7px;top:316.0px"></div>
<div class="hd" style="left:249.1px;top:381.4px"></div>
<div class="hd" style="left:644.7px;top:381.4px"></div>
<div class="hd" style="left:249.1px;top:446.8px"></div>
<div class="hd" style="left:446.9px;top:446.8px"></div>
<div class="hd" style="left:644.7px;top:446.8px"></div>
<div id="ftb">
<div class="abs" style="left:150.800px;top:4px;width:32px;height:31.600px;border-radius:4px;background:#e3ebfb"></div><svg class="abs" style="left:15.0px;top:12.600px;overflow:visible" width="16" height="16" viewBox="0 0 16 16"><path d="M1 0v15.200h15" fill="none" stroke="#3b4049" stroke-width="1.600"/><rect x="2" y="2.800" width="7.500" height="3.800" fill="#3b4049"/><rect x="2" y="8.400" width="11.500" height="3.800" fill="#a3a6ab"/></svg><svg class="abs" style="left:50.6px;top:12.600px;overflow:visible" width="16" height="16" viewBox="0 0 16 16"><path d="M1 0v15.200h15" fill="none" stroke="#3b4049" stroke-width="1.600"/><rect x="2" y="2.800" width="4.500" height="3.800" fill="#3b4049"/><rect x="7" y="2.800" width="4.500" height="3.800" fill="#a3a6ab"/><rect x="2" y="8.400" width="5.500" height="3.800" fill="#3b4049"/><rect x="8" y="8.400" width="5.500" height="3.800" fill="#a3a6ab"/></svg><svg class="abs" style="left:86.8px;top:12.600px;overflow:visible" width="16" height="16" viewBox="0 0 16 16"><path d="M1 0v15.200h15" fill="none" stroke="#3b4049" stroke-width="1.600"/><rect x="4" y="1.200" width="3.800" height="13.200" fill="#a3a6ab"/><rect x="9.800" y="4.800" width="3.800" height="9.600" fill="#3b4049"/></svg><svg class="abs" style="left:122.7px;top:12.600px;overflow:visible" width="16" height="16" viewBox="0 0 16 16"><path d="M1 0v15.200h15" fill="none" stroke="#3b4049" stroke-width="1.600"/><rect x="4" y="1.200" width="3.800" height="6.400" fill="#a3a6ab"/><rect x="4" y="8.200" width="3.800" height="6.200" fill="#3b4049"/><rect x="9.800" y="4.800" width="3.800" height="4.400" fill="#a3a6ab"/><rect x="9.800" y="9.800" width="3.800" height="4.600" fill="#3b4049"/></svg><svg class="abs" style="left:159.0px;top:12.600px;overflow:visible" width="16" height="16" viewBox="0 0 16 16"><path d="M1.800 14.400V10.200L6.200 5.600 9.600 8.800 15.200 1.600V14.400z" fill="#8db2f2"/><path d="M1 0v15.200h15" fill="none" stroke="#2b66e3" stroke-width="1.600"/><path d="M1.800 10.200L6.200 5.600 9.600 8.800 15.200 1.600" fill="none" stroke="#2b66e3" stroke-width="1.600" stroke-linejoin="round"/></svg><svg class="abs" style="left:195.2px;top:12.600px;overflow:visible" width="16" height="16" viewBox="0 0 16 16"><rect x="1" y="0.500" width="15" height="14.700" fill="#a3a6ab"/><path d="M1 0v15.200h15" fill="none" stroke="#3b4049" stroke-width="1.600"/><path d="M1.800 10.200L6.200 5.600 9.600 8.800 15.200 1.600" fill="none" stroke="#3b4049" stroke-width="1.600" stroke-linejoin="round"/></svg><svg class="abs" style="left:231.4px;top:12.600px;overflow:visible" width="16" height="16" viewBox="0 0 16 16"><path d="M1 0v15.200h15" fill="none" stroke="#3b4049" stroke-width="1.600"/><path d="M1.800 10.200L6.200 5.600 9.600 8.800 15.200 1.600" fill="none" stroke="#3b4049" stroke-width="1.600" stroke-linejoin="round"/></svg><svg class="abs" style="left:267.3px;top:12.600px;overflow:visible" width="16" height="16" viewBox="0 0 16 16"><path d="M7.200 2.200A6.800 6.800 0 1 0 14 9H7.200z" fill="#a3a6ab"/><path d="M8.800 .600A6.800 6.800 0 0 1 15.600 7.400H8.800z" fill="#3b4049"/><path d="M7.200 9l4.600 5M7.200 9L1.200 12.200" stroke="#fff" stroke-width="1" fill="none"/></svg><svg class="abs" style="left:303.2px;top:12.600px;overflow:visible" width="16" height="16" viewBox="0 0 16 16"><path d="M0 1h16l-2.600 4.600H2.600z" fill="#3b4049"/><path d="M3.200 6.600h9.600L10.600 10.400H5.400z" fill="#a3a6ab"/><path d="M6 11.400h4l-.800 2.800H6.800z" fill="#c9cbce"/></svg><div class="abs" style="left:337.700px;top:8px;width:1px;height:25px;background:#e6e7ea"></div><div class="abs" style="left:361.300px;top:13px;font-size:13.600px;line-height:17px;font-weight:700;color:#3a3f49;transform:scaleX(1.100);transform-origin:0 50%;-webkit-text-stroke:.200px #3a3f49">Edit</div>
</div>
</div>
<div id="pbd"></div>
<div id="panel">
<svg class="abs" style="left:0;top:0" width="285" height="40" viewBox="1010 87 285 40" fill="none" stroke="#3f4956" stroke-width="1.700" stroke-linecap="round"><path d="M1025.400 95.200V109.800"/><rect x="1028.2" y="99.5" width="11.8" height="6.5" rx="1.800" fill="#a2aab7" stroke="none"/><path d="M1066.500 95.200V109.800"/><g opacity=".880"><rect x="1060.0" y="99.5" width="13.1" height="6.5" rx="1.800" fill="#a2aab7" stroke="none"/></g><rect x="1093.0" y="99.5" width="11.9" height="6.5" rx="1.800" fill="#a2aab7" stroke="none"/><path d="M1107.700 95.200V109.800"/><path d="M1128.200 95.800H1143.200"/><rect x="1132.4" y="98.8" width="6.4" height="11.2" rx="1.800" fill="#a2aab7" stroke="none"/><path d="M1162.500 102.600H1177.300"/><g opacity=".880"><rect x="1167.0" y="96.5" width="6.1" height="12.1" rx="1.800" fill="#a2aab7" stroke="none"/></g><rect x="1201.8" y="95.1" width="6.3" height="11.3" rx="1.800" fill="#a2aab7" stroke="none"/><path d="M1197.400 109.400H1212.200"/><path d="M1232.100 95.200V109.800M1246.100 95.200V109.800"/><rect x="1236.2" y="97.3" width="5.8" height="11.0" rx="1.800" fill="#a2aab7" stroke="none"/><path d="M1266.200 95.800H1281M1266.200 109.400H1281"/><rect x="1267.7" y="99.7" width="11.9" height="6.2" rx="1.800" fill="#a2aab7" stroke="none"/></svg>
<div class="hr" style="top:32px"></div>
<div class="t" style="left:14.50px;top:40px;font-size:14.10px;line-height:18px;font-weight:700;color:#2a3140;">Chart Style</div>
<div class="csb" style="left:15.6px;top:70.7px"><svg class="abs" style="left:14.800px;top:6px;overflow:visible;opacity:.580;" width="16" height="16" viewBox="0 0 16 16"><path d="M1 0v15.200h15" fill="none" stroke="#3b4049" stroke-width="1.600"/><rect x="2" y="2.800" width="7.500" height="3.800" fill="#3b4049"/><rect x="2" y="8.400" width="11.500" height="3.800" fill="#a3a6ab"/></svg></div>
<div class="csb" style="left:67.6px;top:70.7px"><svg class="abs" style="left:14.800px;top:6px;overflow:visible;opacity:.580;" width="16" height="16" viewBox="0 0 16 16"><path d="M1 0v15.200h15" fill="none" stroke="#3b4049" stroke-width="1.600"/><rect x="2" y="2.800" width="4.500" height="3.800" fill="#3b4049"/><rect x="7" y="2.800" width="4.500" height="3.800" fill="#a3a6ab"/><rect x="2" y="8.400" width="5.500" height="3.800" fill="#3b4049"/><rect x="8" y="8.400" width="5.500" height="3.800" fill="#a3a6ab"/></svg></div>
<div class="csb" style="left:119.3px;top:70.7px"><svg class="abs" style="left:14.800px;top:6px;overflow:visible;opacity:.580;" width="16" height="16" viewBox="0 0 16 16"><path d="M1 0v15.200h15" fill="none" stroke="#3b4049" stroke-width="1.600"/><rect x="4" y="1.200" width="3.800" height="13.200" fill="#a3a6ab"/><rect x="9.800" y="4.800" width="3.800" height="9.600" fill="#3b4049"/></svg></div>
<div class="csb" style="left:171.0px;top:70.7px"><svg class="abs" style="left:14.800px;top:6px;overflow:visible;opacity:.580;" width="16" height="16" viewBox="0 0 16 16"><path d="M1 0v15.200h15" fill="none" stroke="#3b4049" stroke-width="1.600"/><rect x="4" y="1.200" width="3.800" height="6.400" fill="#a3a6ab"/><rect x="4" y="8.200" width="3.800" height="6.200" fill="#3b4049"/><rect x="9.800" y="4.800" width="3.800" height="4.400" fill="#a3a6ab"/><rect x="9.800" y="9.800" width="3.800" height="4.600" fill="#3b4049"/></svg></div>
<div class="csb on" style="left:223.2px;top:70.7px"><svg class="abs" style="left:14.800px;top:6px;overflow:visible;" width="16" height="16" viewBox="0 0 16 16"><path d="M1.800 14.400V10.200L6.200 5.600 9.600 8.800 15.200 1.600V14.400z" fill="#8db2f2"/><path d="M1 0v15.200h15" fill="none" stroke="#2b66e3" stroke-width="1.600"/><path d="M1.800 10.200L6.200 5.600 9.600 8.800 15.200 1.600" fill="none" stroke="#2b66e3" stroke-width="1.600" stroke-linejoin="round"/></svg></div>
<div class="csb" style="left:15.6px;top:105.2px"><svg class="abs" style="left:14.800px;top:6px;overflow:visible;opacity:.580;" width="16" height="16" viewBox="0 0 16 16"><rect x="1" y="0.500" width="15" height="14.700" fill="#a3a6ab"/><path d="M1 0v15.200h15" fill="none" stroke="#3b4049" stroke-width="1.600"/><path d="M1.800 10.200L6.200 5.600 9.600 8.800 15.200 1.600" fill="none" stroke="#3b4049" stroke-width="1.600" stroke-linejoin="round"/></svg></div>
<div class="csb" style="left:67.6px;top:105.2px"><svg class="abs" style="left:14.800px;top:6px;overflow:visible;opacity:.580;" width="16" height="16" viewBox="0 0 16 16"><path d="M1 0v15.200h15" fill="none" stroke="#3b4049" stroke-width="1.600"/><path d="M1.800 10.200L6.200 5.600 9.600 8.800 15.200 1.600" fill="none" stroke="#3b4049" stroke-width="1.600" stroke-linejoin="round"/></svg></div>
<div class="csb" style="left:119.3px;top:105.2px"><svg class="abs" style="left:14.800px;top:6px;overflow:visible;opacity:.580;" width="16" height="16" viewBox="0 0 16 16"><path d="M7.200 2.200A6.800 6.800 0 1 0 14 9H7.200z" fill="#a3a6ab"/><path d="M8.800 .600A6.800 6.800 0 0 1 15.600 7.400H8.800z" fill="#3b4049"/><path d="M7.200 9l4.600 5M7.200 9L1.200 12.200" stroke="#fff" stroke-width="1" fill="none"/></svg></div>
<div class="csb" style="left:171.0px;top:105.2px"><svg class="abs" style="left:14.800px;top:6px;overflow:visible;opacity:.580;" width="16" height="16" viewBox="0 0 16 16"><path d="M0 1h16l-2.600 4.600H2.600z" fill="#3b4049"/><path d="M3.200 6.600h9.600L10.600 10.400H5.400z" fill="#a3a6ab"/><path d="M6 11.400h4l-.800 2.800H6.800z" fill="#c9cbce"/></svg></div>
<div class="t" style="left:15.60px;top:150px;font-size:14.20px;line-height:18px;font-weight:400;color:#6f7682;letter-spacing:.130px;">Chart Theme</div>
<div class="bx" style="left:15.1px;top:175.8px;width:255.1px;height:29.5px;"></div>
<svg class="abs" style="left:253.0px;top:188.2px" width="8" height="5" viewBox="0 0 8 5"><path d="M.800 .300h6.400q.700 0 .250.550L4.500 4.400q-.500.500-1 0L.550.850Q.100.300.800.300z" fill="#5d6471"/></svg>
<div class="cb" style="left:15.2px;top:223.3px"></div>
<div class="t" style="left:37.00px;top:221px;font-size:15.00px;line-height:19px;font-weight:400;color:#6f7682;letter-spacing:.200px;">Grid</div>
<div class="cb on" style="left:15.2px;top:265.6px"><svg width="15" height="15" viewBox="0 0 15 15" style="display:block"><path d="M3 8.300l3 2.900 5.600-7" fill="none" stroke="#fff" stroke-width="2.200" stroke-linecap="round" stroke-linejoin="round"/></svg></div>
<div class="t" style="left:37.00px;top:264px;font-size:15.00px;line-height:19px;font-weight:400;color:#3a4250;">Legend</div>
<div class="sg" style="left:15.1px;top:291.0px;width:255.1px;height:29.5px;"><i class="on" style="left:0;width:126px"></i><i class="dv" style="left:126px"></i></div>
<div class="t" style="left:79.30px;top:296px;font-size:15.00px;line-height:19px;font-weight:400;color:#2a63d8;transform:translateX(-50%);">Top</div>
<div class="t" style="left:205.80px;top:296px;font-size:15.00px;line-height:19px;font-weight:400;color:#3a4250;transform:translateX(-50%);letter-spacing:.300px;">Bottom</div>
<div class="cb on" style="left:15.2px;top:346.1px"><svg width="15" height="15" viewBox="0 0 15 15" style="display:block"><path d="M3 8.300l3 2.900 5.600-7" fill="none" stroke="#fff" stroke-width="2.200" stroke-linecap="round" stroke-linejoin="round"/></svg></div>
<div class="t" style="left:37.00px;top:345px;font-size:14.90px;line-height:18px;font-weight:400;color:#3a4250;">Value Axis</div>
<div class="bx" style="left:15.1px;top:371.0px;width:80.4px;height:30.0px;"></div>
<svg class="abs" style="left:24.6px;top:378.4px" width="14" height="15" viewBox="0 0 14 15" fill="none" stroke="#5b616c" stroke-width="1.200"><g transform="translate(6.400 5.700) rotate(41)"><rect x="-2" y="-6.600" width="4" height="13" rx="2"/><path d="M-2 2.400h4v3.300l-.600.900h-2.800l-.600-.900z" fill="#5b616c"/></g><path d="M.300 13.900h12.800" stroke-width="1"/></svg>
<div class="abs" style="left:47.5px;top:375.2px;width:44.5px;height:22.4px;background:#ebebeb;border:1px solid #dcdcdc;border-radius:2.500px"></div>
<div class="bx" style="left:102.5px;top:371.0px;width:59.5px;height:30.0px;"></div>
<div class="t" style="left:107.20px;top:376px;font-size:15.00px;line-height:19px;font-weight:400;color:#3a4250;">1</div>
<div class="t" style="left:141.00px;top:382px;font-size:9.00px;line-height:12px;font-weight:400;color:#a3a8b0;letter-spacing:.300px;">PX</div>
<div class="bx" style="left:169.7px;top:371.0px;width:100.5px;height:30.0px;"></div>
<div class="t" style="left:178.60px;top:376px;font-size:15.00px;line-height:19px;font-weight:400;color:#3a4250;letter-spacing:.200px;">Solid</div>
<svg class="abs" style="left:251.7px;top:383.7px" width="8" height="5" viewBox="0 0 8 5"><path d="M.800 .300h6.400q.700 0 .250.550L4.500 4.400q-.500.500-1 0L.550.850Q.100.300.800.300z" fill="#5d6471"/></svg>
<div class="sg" style="left:15.1px;top:407.9px;width:67.0px;height:30.0px;"><i class="on" style="left:0;width:32.500px"></i><i class="dv" style="left:32.500px"></i></div>
<svg class="abs" style="left:15.6px;top:408.4px" width="66" height="29" viewBox="0 0 66 29" fill="none" stroke-width="1.500" stroke-linecap="round" stroke-linejoin="round"><g stroke="#2a63d8"><path d="M9.800 8.200V20.800M13.600 14.500h9M16.800 11.200l-3.300 3.300 3.300 3.300"/></g><g stroke="#6b727e"><path d="M56.600 8.200V20.800M43.800 14.500h9M49.600 11.200l3.300 3.300-3.300 3.300"/></g></svg>
<div class="sg" style="left:89.8px;top:407.9px;width:180.4px;height:30.0px;"><i class="dv" style="left:59.600px"></i><i class="dv" style="left:118.700px"></i></div>
<div class="t" style="left:119.80px;top:414px;font-size:15.00px;line-height:19px;font-weight:400;color:#3a4250;transform:translateX(-50%);letter-spacing:.300px;">Line</div>
<div class="t" style="left:180.00px;top:414px;font-size:15.00px;line-height:19px;font-weight:400;color:#3a4250;transform:translateX(-50%);letter-spacing:.300px;">Ticks</div>
<div class="t" style="left:239.60px;top:414px;font-size:15.00px;line-height:19px;font-weight:400;color:#3a4250;transform:translateX(-50%);letter-spacing:.300px;">Labels</div>
<div class="cb on" style="left:15.2px;top:463.3px"><svg width="15" height="15" viewBox="0 0 15 15" style="display:block"><path d="M3 8.300l3 2.900 5.600-7" fill="none" stroke="#fff" stroke-width="2.200" stroke-linecap="round" stroke-linejoin="round"/></svg></div>
<div class="t" style="left:37.00px;top:461px;font-size:15.00px;line-height:19px;font-weight:400;color:#3a4250;letter-spacing:.280px;">Category Axis</div>
<div class="bx" style="left:15.1px;top:488.4px;width:80.4px;height:29.5px;"></div>
<svg class="abs" style="left:24.6px;top:495.5px" width="14" height="15" viewBox="0 0 14 15" fill="none" stroke="#5b616c" stroke-width="1.200"><g transform="translate(6.400 5.700) rotate(41)"><rect x="-2" y="-6.600" width="4" height="13" rx="2"/><path d="M-2 2.400h4v3.300l-.600.900h-2.800l-.600-.900z" fill="#5b616c"/></g><path d="M.300 13.900h12.800" stroke-width="1"/></svg>
<div class="abs" style="left:47.5px;top:492.6px;width:44.5px;height:21.9px;background:#ebebeb;border:1px solid #dcdcdc;border-radius:2.500px"></div>
<div class="bx" style="left:102.5px;top:488.4px;width:59.5px;height:29.5px;"></div>
<div class="t" style="left:107.20px;top:494px;font-size:15.00px;line-height:19px;font-weight:400;color:#3a4250;">1</div>
<div class="t" style="left:141.00px;top:499px;font-size:9.00px;line-height:12px;font-weight:400;color:#a3a8b0;letter-spacing:.300px;">PX</div>
<div class="bx" style="left:169.7px;top:488.4px;width:100.5px;height:29.5px;"></div>
<div class="t" style="left:178.60px;top:494px;font-size:15.00px;line-height:19px;font-weight:400;color:#3a4250;letter-spacing:.200px;">Solid</div>
<svg class="abs" style="left:251.7px;top:500.9px" width="8" height="5" viewBox="0 0 8 5"><path d="M.800 .300h6.400q.700 0 .250.550L4.500 4.400q-.500.500-1 0L.550.850Q.100.300.800.300z" fill="#5d6471"/></svg>
<div class="sg" style="left:15.1px;top:525.9px;width:67.0px;height:29.0px;"><i class="on" style="left:0;width:32.500px"></i><i class="dv" style="left:32.500px"></i></div>
<svg class="abs" style="left:15.6px;top:526.4px" width="66" height="28" viewBox="0 0 66 28" fill="none" stroke-width="1.500" stroke-linecap="round" stroke-linejoin="round"><g stroke="#2a63d8"><path d="M10 20.600h13.200M16.600 7.600v9M13.400 13.500l3.200 3.200 3.200-3.200"/></g><g stroke="#6b727e"><path d="M42.800 7.200h13.200M49.400 20.200v-9M46.200 14.300l3.200-3.200 3.200 3.200"/></g></svg>
<div class="sg" style="left:89.8px;top:525.9px;width:180.4px;height:29.0px;"><i class="on" style="left:0.0px;width:60.1px"></i><i class="on" style="left:119.2px;width:60.2px"></i><i class="dv" style="left:59.600px"></i><i class="dv" style="left:118.700px"></i></div>
<div class="t" style="left:119.80px;top:531px;font-size:15.00px;line-height:19px;font-weight:400;color:#2a63d8;transform:translateX(-50%);letter-spacing:.300px;">Line</div>
<div class="t" style="left:180.00px;top:531px;font-size:15.00px;line-height:19px;font-weight:400;color:#3a4250;transform:translateX(-50%);letter-spacing:.300px;">Ticks</div>
<div class="t" style="left:239.60px;top:531px;font-size:15.00px;line-height:19px;font-weight:400;color:#2a63d8;transform:translateX(-50%);letter-spacing:.300px;">Labels</div>
<div class="cb on" style="left:15.2px;top:573.5px"><svg width="15" height="15" viewBox="0 0 15 15" style="display:block"><path d="M3 8.300l3 2.900 5.600-7" fill="none" stroke="#fff" stroke-width="2.200" stroke-linecap="round" stroke-linejoin="round"/></svg></div>
<div class="t" style="left:37.00px;top:571px;font-size:15.00px;line-height:19px;font-weight:400;color:#3a4250;">Plot</div>
<div class="cb" style="left:15.2px;top:601.2px"></div>
<div class="t" style="left:37.00px;top:599px;font-size:15.00px;line-height:19px;font-weight:400;color:#6f7682;letter-spacing:.100px;">Render as percentages</div>
<div class="cb" style="left:15.2px;top:621.7px"></div>
<div class="t" style="left:37.00px;top:620px;font-size:15.00px;line-height:19px;font-weight:400;color:#6f7682;letter-spacing:0;">Show values</div>
<div class="cb on" style="left:15.2px;top:642.7px"><svg width="15" height="15" viewBox="0 0 15 15" style="display:block"><path d="M3 8.300l3 2.900 5.600-7" fill="none" stroke="#fff" stroke-width="2.200" stroke-linecap="round" stroke-linejoin="round"/></svg></div>
<div class="t" style="left:37.00px;top:641px;font-size:15.00px;line-height:19px;font-weight:400;color:#3a4250;">Smooth</div>
<div class="hr" style="top:673px"></div>
<div class="t" style="left:14.90px;top:683px;font-size:14.20px;line-height:18px;font-weight:700;color:#2a3140;">Text</div>
<svg class="abs" style="left:257.4px;top:685.8px" width="13" height="14" viewBox="0 0 13 14" fill="#f7f8fa" stroke="#4a515d" stroke-width="1.300" stroke-linejoin="round"><rect x=".800" y=".800" width="7" height="8.600" rx="1.600"/><rect x="4.600" y="4.400" width="7" height="8.600" rx="1.600"/></svg>
<div class="bx" style="left:15.5px;top:712.3px;width:159.4px;height:29.6px;"></div>
<div class="t" style="left:22.70px;top:717px;font-size:16.30px;line-height:20px;font-weight:400;color:#3a4250;">Inter</div>
<div class="abs" style="left:151.2px;top:717.0px;width:1.0px;height:20.0px;background:#e4e6ea"></div>
<svg class="abs" style="left:158.8px;top:725.2px" width="8" height="5" viewBox="0 0 8 5"><path d="M.800 .300h6.400q.700 0 .250.550L4.500 4.400q-.500.500-1 0L.550.850Q.100.300.800.300z" fill="#5d6471"/></svg>
<div class="bx" style="left:183.0px;top:712.3px;width:87.0px;height:29.6px;"></div>
<div class="t" style="left:189.10px;top:720px;font-size:12.60px;line-height:16px;font-weight:400;color:#3a4250;">Regular</div>
<div class="abs" style="left:246.0px;top:717.0px;width:1.0px;height:20.0px;background:#e4e6ea"></div>
<svg class="abs" style="left:254.0px;top:725.2px" width="8" height="5" viewBox="0 0 8 5"><path d="M.800 .300h6.400q.700 0 .250.550L4.500 4.400q-.500.500-1 0L.550.850Q.100.300.800.300z" fill="#5d6471"/></svg>
</div>
<div class="abs" style="left:-9px;top:824px;width:18px;height:18px;border-radius:50%;background:#1c8fe0;border:2px solid #bfe3fb"></div>
</div></body></html>
